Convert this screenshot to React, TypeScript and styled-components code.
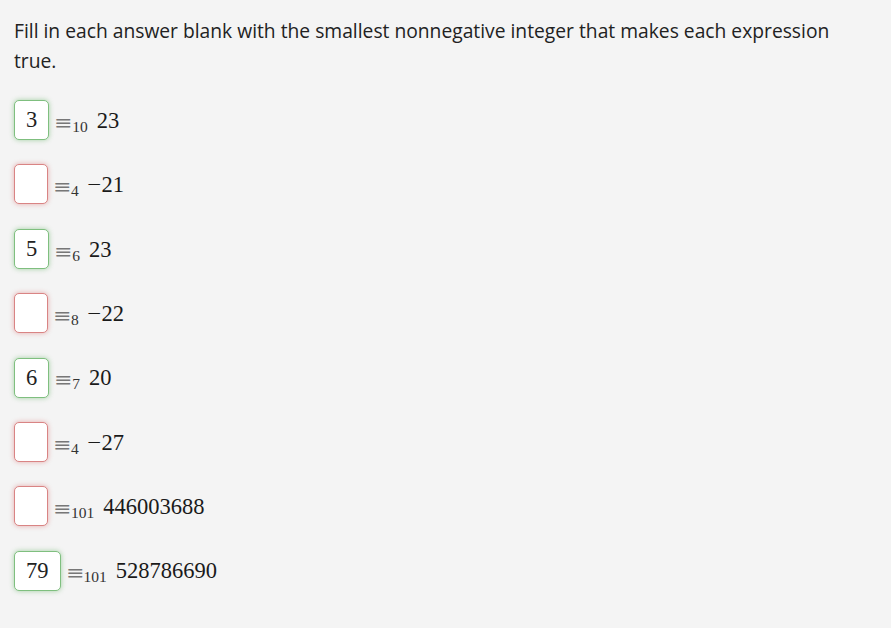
import React from "react";
import styled, { createGlobalStyle } from "styled-components";

const GlobalStyle = createGlobalStyle`
  html, body {
    margin: 0;
    padding: 0;
    background: #f4f4f4;
  }
`;

export const Page = styled.div`
  padding: 16px 14px;
  max-width: 850px;
  font-family: "Open Sans", "Noto Sans", sans-serif;
  color: #222;
`;

export const Prompt = styled.p`
  margin: 0 0 24px 0;
  font-size: 19.25px;
  line-height: 30px;
`;

export const Rows = styled.div`
  display: flex;
  flex-direction: column;
  gap: 24.4px;
`;

export const Row = styled.div`
  display: flex;
  align-items: center;
  height: 40px;
`;

export const Answer = styled.div<{ $state: "right" | "wrong" }>`
  box-sizing: border-box;
  height: 40px;
  min-width: 34px;
  padding: 0 11px;
  display: flex;
  align-items: center;
  justify-content: center;
  background: #fff;
  border-radius: 5px;
  font-family: "Liberation Serif", "DejaVu Serif", serif;
  font-size: 22.5px;
  color: #222;
  border: 1px solid
    ${(p) => (p.$state === "right" ? "#7fbf7f" : "#d98484")};
  box-shadow: 0 0 5px
    ${(p) =>
      p.$state === "right" ? "rgba(60, 160, 60, 0.45)" : "rgba(210, 60, 60, 0.4)"};
`;

export const Expr = styled.span`
  margin-left: 5px;
  font-family: "Liberation Serif", "DejaVu Serif", serif;
  font-size: 22.5px;
  color: #1a1a1a;
  display: flex;
  align-items: baseline;
  line-height: 1;
  position: relative;
  top: 1px;
`;

export const Rel = styled.span`
  display: inline-block;
  flex: 0 0 17px;
  width: 17px;
  white-space: nowrap;
  font-family: "DejaVu Sans", sans-serif;
  font-size: 17px;
  color: #777;
  transform: scaleX(1.3) scaleY(1.1);
  transform-origin: left center;
`;

export const Sub = styled.sub`
  font-size: 15.5px;
  color: #333;
  vertical-align: baseline;
  position: relative;
  top: 4px;
  margin-left: 1px;
  margin-right: 9px;
`;

export const Minus = styled.span`
  display: inline-block;
  transform: scaleX(1.1);
  margin-right: 1px;
`;

const items: { value: string; mod: string; neg?: boolean; rhs: string }[] = [
  { value: "3", mod: "10", rhs: "23" },
  { value: "", mod: "4", neg: true, rhs: "21" },
  { value: "5", mod: "6", rhs: "23" },
  { value: "", mod: "8", neg: true, rhs: "22" },
  { value: "6", mod: "7", rhs: "20" },
  { value: "", mod: "4", neg: true, rhs: "27" },
  { value: "", mod: "101", rhs: "446003688" },
  { value: "79", mod: "101", rhs: "528786690" },
];

export default function App() {
  return (
    <>
      <GlobalStyle />
      <Page>
        <Prompt>
          Fill in each answer blank with the smallest nonnegative integer that
          makes each expression true.
        </Prompt>
        <Rows>
          {items.map((it, i) => (
            <Row key={i}>
              <Answer $state={it.value ? "right" : "wrong"}>{it.value}</Answer>
              <Expr>
                <Rel>≡</Rel>
                <Sub>{it.mod}</Sub>
                {it.neg && <Minus>−</Minus>}
                {it.rhs}
              </Expr>
            </Row>
          ))}
        </Rows>
      </Page>
    </>
  );
}
